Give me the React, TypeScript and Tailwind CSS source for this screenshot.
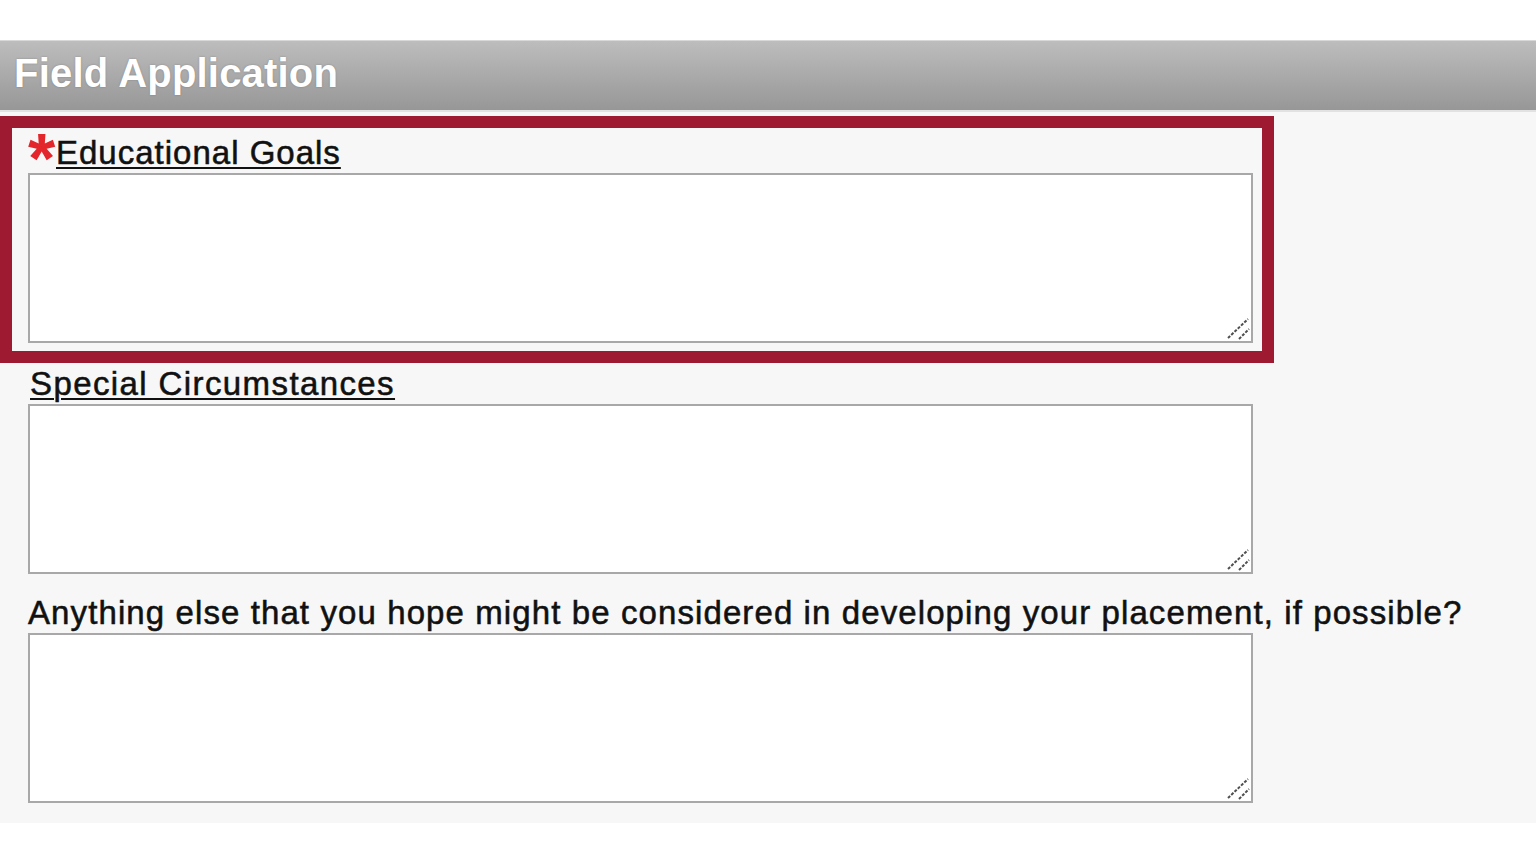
import React from 'react';

const labelText = "text-[33px] leading-[38px] text-[#111] [-webkit-text-stroke:0.55px_#111]";

const Box: React.FC = () => (
  <div className="relative w-[1225px] h-[170px]">
    <textarea className="block w-full h-full resize-none bg-white border-2 border-[#a8a8a8] outline-none" />
    <svg className="absolute right-[2px] bottom-[2px] pointer-events-none" width="24" height="24" viewBox="0 0 24 24">
      <line x1="1" y1="21" x2="21" y2="2" stroke="#4f4f4f" strokeWidth="2" strokeDasharray="3 1.5" />
      <line x1="12" y1="22" x2="22" y2="12" stroke="#4f4f4f" strokeWidth="2" strokeDasharray="3 1.5" />
    </svg>
  </div>
);

const App: React.FC = () => {
  return (
    <div className="min-h-screen bg-white pt-[40px] font-['Liberation_Sans',Arial,sans-serif]">
      <div className="h-[72px] border-t border-[#d8d8d8] border-b-2 border-b-[#e2e2e2] bg-gradient-to-b from-[#bdbdbd] to-[#979797] px-[14px] flex items-center">
        <h1 className="text-[40px] font-bold text-white leading-none tracking-[0.2px] -mt-[5px] [text-shadow:0_0_2px_rgba(0,0,0,0.25)]">Field Application</h1>
      </div>

      <div className="bg-[#f7f7f7] pt-[4px] pb-[20px]">
        <div className="w-[1274px] border-[12px] border-[#9d1a31] pl-4 pr-[10px] pt-[6px] pb-[8px]">
          <div className="flex items-start mb-[1px]">
            <span className="h-[38px] w-[28px] overflow-visible text-[70px] font-bold leading-none text-[#e3262b] -mt-[10px]">*</span>
            <span className={`${labelText} tracking-[1px] underline decoration-2 underline-offset-[3px]`}>Educational Goals</span>
          </div>
          <Box />
        </div>

        <div className="pl-[28px] pt-[2px]">
          <div className={`${labelText} tracking-[1.4px] ml-[2px] underline decoration-2 underline-offset-[3px] mb-[1px]`}>Special Circumstances</div>
          <Box />
        </div>

        <div className="pl-[28px] pt-[20px]">
          <div className={`${labelText} tracking-[1.1px] mb-[1px] whitespace-nowrap`}>Anything else that you hope might be considered in developing your placement, if possible?</div>
          <Box />
        </div>
      </div>
    </div>
  );
};

export default App;
